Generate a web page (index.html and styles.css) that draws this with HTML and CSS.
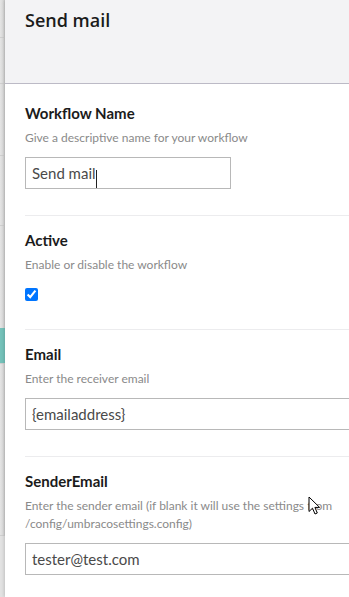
FILE: index.html
```html
<!DOCTYPE html>
<html lang="en">
<head>
  <meta charset="UTF-8">
  <title>Send mail</title>
  <link rel="stylesheet" href="styles.css">
</head>
<body>

<div class="backdrop">
  <div class="bd-row" style="height: 38px;"></div>
  <div class="bd-row" style="height: 46px;"></div>
  <div class="bd-row" style="height: 72px;"></div>
  <div class="bd-row" style="height: 70px;"></div>
  <div class="bd-row bd-plain" style="height: 102px;"></div>
  <div class="bd-row bd-active" style="height: 36px;"></div>
  <div class="bd-row bd-plain" style="height: 119px;"></div>
  <div class="bd-row" style="height: 53px;"></div>
</div>

<div class="panel">
  <div class="panel-header">
    <h1>Send mail</h1>
  </div>

  <div class="panel-body">
    <div class="field">
      <h3 class="field-title">Workflow Name</h3>
      <p class="field-desc">Give a descriptive name for your workflow</p>
      <input type="text" class="input input-short" value="Send mail">
      <span class="caret"></span>
    </div>

    <div class="field">
      <h3 class="field-title">Active</h3>
      <p class="field-desc">Enable or disable the workflow</p>
      <input type="checkbox" class="check" checked>
    </div>

    <div class="field">
      <h3 class="field-title">Email</h3>
      <p class="field-desc">Enter the receiver email</p>
      <input type="text" class="input" value="{emailaddress}">
    </div>

    <div class="field">
      <h3 class="field-title">SenderEmail</h3>
      <p class="field-desc">Enter the sender email (if blank it will use the settings from /config/umbracosettings.config)</p>
      <input type="text" class="input" value="tester@test.com">
    </div>
  </div>

  <svg class="pointer" width="13" height="20" viewBox="0 0 13 20">
    <path d="M1 1 L1 15.5 L4.5 12.2 L7 18 L9.3 17 L6.9 11.4 L11.6 11.4 Z" fill="#fff" stroke="#000" stroke-width="1" stroke-linejoin="round"/>
  </svg>
</div>

</body>
</html>
```

FILE: styles.css
```css
html, body {
  margin: 0;
  padding: 0;
  height: 100%;
  background-color: #ffffff;
  font-family: Lato, "Open Sans", Arial, sans-serif;
}

body {
  display: flex;
  overflow: hidden;
}

.backdrop {
  width: 5px;
  flex-shrink: 0;
  background-color: #e2e2e2;
}

.bd-row {
  box-sizing: border-box;
  border-bottom: 1px solid #cfcfcf;
  background: linear-gradient(to right, #e4e4e4 0, #dcdcdc 3px, #c9c9c9 5px);
}

.bd-plain {
  border-bottom: none;
}

.bd-active {
  background: #74c2ba;
}

.panel {
  width: 430px;
  flex-shrink: 0;
  background-color: #ffffff;
  box-shadow: -1px 0 3px rgba(0,0,0,0.15);
  position: relative;
}

.panel-header {
  height: 84px;
  box-sizing: border-box;
  background-color: #f3f3f5;
  border-bottom: 1px solid #bcbac6;
  padding: 7px 20px 0 20px;
}

.panel-header h1 {
  margin: 0;
  font-family: "Open Sans", Lato, Arial, sans-serif;
  font-size: 18px;
  line-height: 26px;
  font-weight: 600;
  color: #1b1b1b;
}

.panel-body {
  padding: 5px 20px 0 20px;
}

.field {
  padding: 14px 0 26px 0;
  border-top: 1px solid #ececee;
  position: relative;
}

.field:first-child {
  border-top: none;
  padding-top: 14px;
}

.field-title {
  margin: 0;
  font-size: 15px;
  line-height: 20px;
  font-weight: 700;
  color: #1b1b1b;
}

.field-desc {
  margin: 6px 0 0 0;
  font-size: 12px;
  line-height: 18px;
  color: #8a8a8a;
}

.input {
  display: block;
  box-sizing: border-box;
  width: 100%;
  height: 32px;
  margin-top: 10px;
  padding: 0 6px;
  border: 1px solid #b8b8b8;
  border-radius: 0;
  font-family: Lato, "Open Sans", Arial, sans-serif;
  font-size: 15px;
  color: #4a4a4a;
  background-color: #ffffff;
  outline: none;
}

.input-short {
  width: 206px;
}

.caret {
  position: absolute;
  left: 71px;
  top: 81px;
  width: 1px;
  height: 18px;
  background-color: #222;
}

.check {
  display: block;
  width: 13px;
  height: 13px;
  margin: 14px 0 2px 0;
  accent-color: #0075ff;
}

.pointer {
  position: absolute;
  left: 303px;
  top: 496px;
}
```
